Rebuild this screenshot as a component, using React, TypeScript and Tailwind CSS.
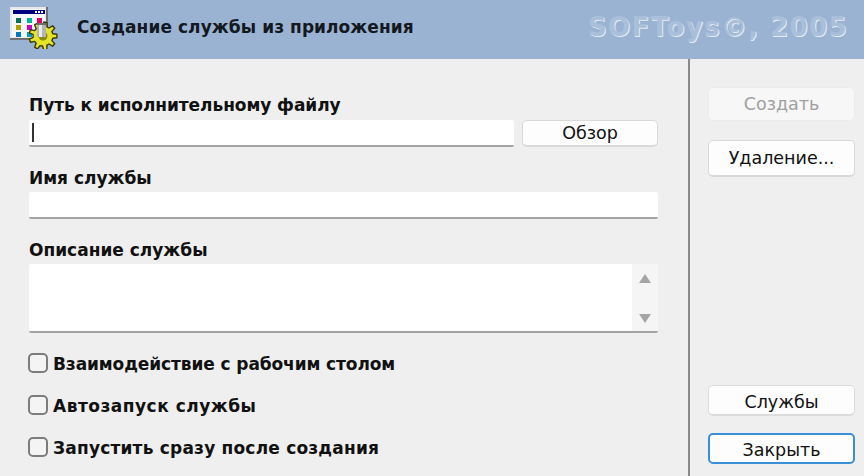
import React from "react";

function gearPoints(cx: number, cy: number, ro: number, ri: number, n: number) {
  const pts: string[] = [];
  for (let i = 0; i < n; i++) {
    const a = (i / n) * Math.PI * 2;
    const w = (Math.PI * 2) / n;
    const add = (ang: number, r: number) => pts.push((cx + Math.cos(ang) * r).toFixed(1) + "," + (cy + Math.sin(ang) * r).toFixed(1));
    add(a - w * 0.32, ri);
    add(a - w * 0.17, ro);
    add(a + w * 0.17, ro);
    add(a + w * 0.32, ri);
  }
  return pts.join(" ");
}

function Icon() {
  return (
    <svg width="50" height="42" viewBox="0 0 50 42" className="block">
      <g shapeRendering="crispEdges">
        <rect x="0" y="0" width="38" height="33" fill="#6f6f6f" />
        <rect x="0" y="0" width="36" height="31" fill="#e8e8e8" />
        <rect x="2" y="2" width="33" height="28" fill="#f6f6f6" />
        <rect x="3" y="3" width="32" height="4" fill="#000080" />
        <rect x="25" y="4" width="2" height="2" fill="#fff" /><rect x="28" y="4" width="2" height="2" fill="#fff" /><rect x="31" y="4" width="2" height="2" fill="#fff" />
        <rect x="6" y="11" width="5" height="5" fill="#0a6e58" />
        <rect x="17" y="11" width="5" height="5" fill="#00b8a0" />
        <rect x="27" y="11" width="5" height="5" fill="#e00068" />
        <rect x="6" y="18" width="5" height="5" fill="#b0a000" />
        <rect x="17" y="18" width="5" height="5" fill="#d000c0" />
        <rect x="6" y="25" width="5" height="5" fill="#0078c0" />
        <rect x="17" y="25" width="5" height="5" fill="#00a0c0" />
      </g>
      <polygon points={gearPoints(33, 29, 14, 10, 9)} fill="#e4e428" stroke="#3a3a08" strokeWidth="1.4" strokeLinejoin="round" />
      <circle cx="33" cy="29" r="4.5" fill="#8a8a18" />
      <g shapeRendering="crispEdges">
        <rect x="27" y="17" width="9" height="13" fill="#b4b4b4" />
        <rect x="29" y="17" width="3" height="13" fill="#ececec" />
        <rect x="27" y="16" width="9" height="2" fill="#6c6c6c" />
      </g>
    </svg>
  );
}

function Btn({ label, className = "" }: { label: string; className?: string }) {
  return (
    <div className={"flex items-center justify-center rounded-[5px] bg-[#fdfdfd] text-[#111] " + className}>
      {label}
    </div>
  );
}

function Check({ label, className = "" }: { label: string; className?: string }) {
  return (
    <div className="flex items-start h-[20px]">
      <div className="w-[20px] h-[20px] rounded-[5px] border-2 border-[#7c7c7c] bg-[#f4f4f4] -ml-[1px] -mt-[1px] shrink-0" />
      <span className={"ml-[5px] font-bold text-[17px] leading-[20px] text-[#111] " + className}>{label}</span>
    </div>
  );
}

export default function App() {
  return (
    <div className="w-[864px] h-[476px] overflow-hidden flex flex-col bg-[#efefef] font-['DejaVu_Sans',sans-serif] text-[17.5px]">
      <header className="h-[59px] shrink-0 bg-[#9ab3d2] flex items-start pl-[10px]">
        <div className="mt-[7px] w-[67px] shrink-0"><Icon /></div>
        <span className="mt-[17px] font-bold text-[17px] tracking-[0.07px] leading-[20px] text-[#14181f]">Создание службы из приложения</span>
        <span className="ml-auto mr-[16px] mt-[12px] font-bold text-[26px] tracking-[1.4px] leading-[30px] text-[#a9bfda] [text-shadow:1px_1px_0_#e4ebf3]">SOFToys©, 2005</span>
      </header>
      <div className="flex flex-1">
        <main className="w-[688px] pl-[29px] pr-[30px] pt-[36px]">
          <label className="block font-bold text-[17px] tracking-[-0.07px] leading-[20px] text-[#111]">Путь к исполнительному файлу</label>
          <div className="flex mt-[5px] gap-[8px]">
            <div className="flex-1 h-[27px] rounded-[2px] bg-white border-b-2 border-[#a3a3a3] flex items-center pl-[3px]">
              <div className="w-[2px] h-[19px] bg-[#333]" />
            </div>
            <Btn label="Обзор" className="w-[136px] h-[27px] border border-[#d9d9d9] border-b-2" />
          </div>
          <label className="block mt-[21px] font-bold text-[17px] leading-[20px] text-[#111]">Имя службы</label>
          <div className="mt-[4px] h-[27px] rounded-[2px] bg-white border-b-2 border-[#a3a3a3]" />
          <label className="block mt-[21px] font-bold text-[17px] leading-[20px] text-[#111]">Описание службы</label>
          <div className="mt-[4px] h-[69px] rounded-[2px] bg-white border-b-2 border-[#a3a3a3] flex justify-end">
            <div className="w-[26px] bg-[#f5f5f5] flex flex-col items-center justify-between pt-[10px] pb-[8px]">
              <div className="w-0 h-0 border-x-[6px] border-x-transparent border-b-[9px] border-b-[#a5a5a5]" />
              <div className="w-0 h-0 border-x-[6px] border-x-transparent border-t-[9px] border-t-[#a5a5a5]" />
            </div>
          </div>
          <div className="mt-[21px] flex flex-col gap-[22px]">
            <Check label="Взаимодействие с рабочим столом" className="tracking-[-0.1px]" />
            <Check label="Автозапуск службы" className="tracking-[0.5px]" />
            <Check label="Запустить сразу после создания" className="tracking-[0.2px]" />
          </div>
        </main>
        <div className="w-[2px] bg-[#8a8a8a]" />
        <aside className="flex-1 pl-[18px] pr-[9px] pt-[28px] pb-[12px] flex flex-col">
          <div className="flex items-center justify-center pt-[1px] h-[34px] rounded-[5px] bg-[#f7f7f7] border border-[#ececec] text-[#a0a0a0]">Создать</div>
          <Btn label="Удаление..." className="mt-[19px] h-[37px] pt-[1px] border border-[#d9d9d9] border-b-2" />
          <div className="flex-1" />
          <Btn label="Службы" className="h-[31px] pt-[4px] border border-[#dcdcdc] border-b-2" />
          <Btn label="Закрыть" className="mt-[17px] h-[31px] pt-[3px] border-2 border-[#3a8fd8]" />
        </aside>
      </div>
    </div>
  );
}
